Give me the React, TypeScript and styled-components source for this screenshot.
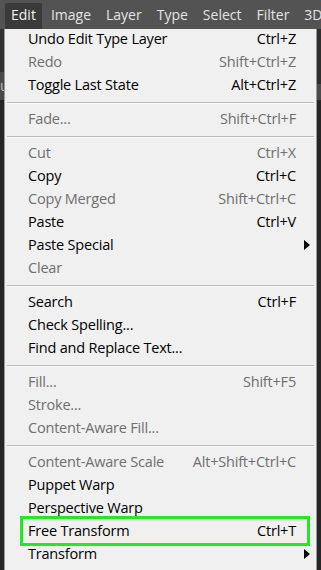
import React from "react";
import styled, { createGlobalStyle } from "styled-components";

const Global = createGlobalStyle`
  html, body { margin: 0; padding: 0; background: #262626; }
  #root { width: 321px; height: 570px; }
`;

const Page = styled.div`
  width: 321px;
  height: 570px;
  overflow: hidden;
  display: flex;
  flex-direction: column;
  background: #262626;
  font-family: "Open Sans", "Noto Sans", sans-serif;
`;

const MenuBar = styled.div`
  height: 29px;
  flex: none;
  display: flex;
  align-items: flex-end;
  gap: 3px;
  padding-left: 5px;
  background: #535353;
  white-space: nowrap;
`;

const BarItem = styled.div<{ $active?: boolean }>`
  height: 23px;
  line-height: 23px;
  padding: 0 6px 3px;
  font-size: 14px;
  color: ${(p) => (p.$active ? "#f2f2f2" : "#e4e4e4")};
  background: ${(p) => (p.$active ? "#3a3a3a" : "transparent")};
  border-radius: ${(p) => (p.$active ? "2px 2px 0 0" : "0")};
`;

const Body = styled.div`
  flex: 1;
  display: flex;
  min-height: 0;
`;

const Gutter = styled.div`
  width: 4px;
  flex: none;
  display: flex;
  flex-direction: column;
  overflow: hidden;
`;

const Strip = styled.div<{ $h: number; $bg: string }>`
  height: ${(p) => p.$h}px;
  flex: ${(p) => (p.$h === 0 ? "1" : "none")};
  background: ${(p) => p.$bg};
  color: #bdbdbd;
  font-size: 14px;
  line-height: 28px;
  overflow: hidden;
`;

const Panel = styled.div`
  flex: 1;
  display: flex;
  flex-direction: column;
  background: #f0f0f0;
  border-left: 1px solid #9a9a9a;
  border-right: 1px solid #9a9a9a;
`;

const Row = styled.div<{ $disabled?: boolean; $highlight?: boolean }>`
  position: relative;
  flex: none;
  height: 19px;
  line-height: 19px;
  padding-bottom: 4px;
  padding-left: 23px;
  display: grid;
  grid-template-columns: 1fr auto 20px;
  font-size: 14.5px;
  letter-spacing: -0.2px;
  white-space: nowrap;
  color: ${(p) => (p.$disabled ? "#6f6f6f" : "#000000")};

  ${(p) =>
    p.$highlight &&
    `
    &::after {
      content: "";
      position: absolute;
      left: 15px;
      right: 6px;
      top: -5px;
      bottom: -2px;
      border: 3px solid #24e824;
      pointer-events: none;
    }
  `}
`;

const Label = styled.span``;

const Shortcut = styled.span`
  text-align: right;
`;

const ArrowCell = styled.span`
  display: flex;
  align-items: center;
  justify-content: center;
  padding-left: 1px;
  padding-top: 1px;
`;

const Separator = styled.div`
  flex: none;
  height: 11px;
  box-sizing: border-box;
  padding-top: 4px;
  margin: 0 2px;
  &::before {
    content: "";
    display: block;
    height: 1px;
    background: #bdbdbd;
    border-bottom: 1px solid #fafafa;
  }
`;

type Entry =
  | { sep: true }
  | {
      sep?: false;
      label: string;
      shortcut?: string;
      disabled?: boolean;
      submenu?: boolean;
      highlight?: boolean;
    };

const entries: Entry[] = [
  { label: "Undo Edit Type Layer", shortcut: "Ctrl+Z" },
  { label: "Redo", shortcut: "Shift+Ctrl+Z", disabled: true },
  { label: "Toggle Last State", shortcut: "Alt+Ctrl+Z" },
  { sep: true },
  { label: "Fade...", shortcut: "Shift+Ctrl+F", disabled: true },
  { sep: true },
  { label: "Cut", shortcut: "Ctrl+X", disabled: true },
  { label: "Copy", shortcut: "Ctrl+C" },
  { label: "Copy Merged", shortcut: "Shift+Ctrl+C", disabled: true },
  { label: "Paste", shortcut: "Ctrl+V" },
  { label: "Paste Special", submenu: true },
  { label: "Clear", disabled: true },
  { sep: true },
  { label: "Search", shortcut: "Ctrl+F" },
  { label: "Check Spelling..." },
  { label: "Find and Replace Text..." },
  { sep: true },
  { label: "Fill...", shortcut: "Shift+F5", disabled: true },
  { label: "Stroke...", disabled: true },
  { label: "Content-Aware Fill...", disabled: true },
  { sep: true },
  { label: "Content-Aware Scale", shortcut: "Alt+Shift+Ctrl+C", disabled: true },
  { label: "Puppet Warp" },
  { label: "Perspective Warp" },
  { label: "Free Transform", shortcut: "Ctrl+T", highlight: true },
  { label: "Transform", submenu: true },
];

const Arrow = () => (
  <svg width="6" height="10" viewBox="0 0 6 10">
    <path d="M0 0 L6 5 L0 10 Z" fill="#000" />
  </svg>
);

export default function App() {
  return (
    <Page>
      <Global />
      <MenuBar>
        <BarItem $active>Edit</BarItem>
        <BarItem>Image</BarItem>
        <BarItem>Layer</BarItem>
        <BarItem>Type</BarItem>
        <BarItem>Select</BarItem>
        <BarItem>Filter</BarItem>
        <BarItem>3D</BarItem>
      </MenuBar>
      <Body>
        <Gutter>
          <Strip $h={43} $bg="#313131" />
          <Strip $h={28} $bg="#4a4a4a">u</Strip>
          <Strip $h={0} $bg="#262626" />
        </Gutter>
        <Panel>
          {entries.map((e, i) =>
            e.sep ? (
              <Separator key={i} />
            ) : (
              <Row key={i} $disabled={e.disabled} $highlight={e.highlight}>
                <Label>{e.label}</Label>
                <Shortcut>{e.shortcut ?? ""}</Shortcut>
                <ArrowCell>{e.submenu ? <Arrow /> : null}</ArrowCell>
              </Row>
            )
          )}
        </Panel>
        <Gutter>
          <Strip $h={55} $bg="#2e2e2e" />
          <Strip $h={16} $bg="#4a4a4a" />
          <Strip $h={0} $bg="#262626" />
        </Gutter>
      </Body>
    </Page>
  );
}
